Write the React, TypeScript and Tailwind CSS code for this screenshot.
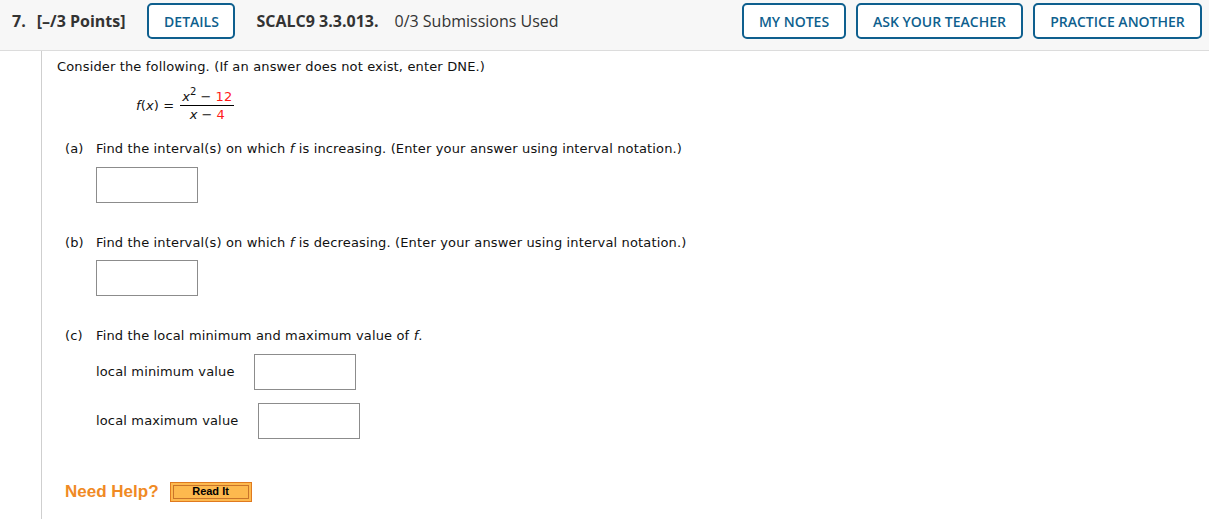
import React from "react";

const blueBtn =
  "h-[36px] border-2 border-[#0e5f8e] rounded-[5px] text-[#0e5f8e] text-[14px] font-semibold flex items-center justify-center bg-white";

function Box({ className = "" }: { className?: string }) {
  return <div className={`w-[102px] h-[36px] border border-[#8c8c8c] bg-white ${className}`} />;
}

export default function App() {
  return (
    <div className="w-[1209px] h-[519px] bg-white overflow-hidden" style={{ fontFamily: "'Open Sans', sans-serif" }}>
      <div className="h-[51px] bg-[#f7f7f7] border-b border-[#dcdcdc] flex items-center pl-[12px] pr-[7px] pb-[8px]">
        <span className="text-[16px] font-bold text-[#333]">7.</span>
        <span className="text-[16px] font-bold text-[#333] ml-[11px]">[–/3 Points]</span>
        <div className={`${blueBtn} w-[88px] ml-[22px]`}>DETAILS</div>
        <span className="text-[16px] font-bold text-[#333] ml-[21px]">SCALC9 3.3.013.</span>
        <span className="text-[16px] text-[#333] ml-[16px]">0/3 Submissions Used</span>
        <div className="flex-1" />
        <div className={`${blueBtn} w-[104px]`}>MY NOTES</div>
        <div className={`${blueBtn} w-[167px] ml-[10px]`}>ASK YOUR TEACHER</div>
        <div className={`${blueBtn} w-[169px] ml-[10px]`}>PRACTICE ANOTHER</div>
      </div>
      <div className="flex h-[468px]">
        <div className="w-[42px] border-r border-[#cfcfcf]" />
        <div
          className="pl-[15px] pt-[8px] text-[13px] tracking-[0.15px] text-[#111]"
          style={{ fontFamily: "'DejaVu Sans', Verdana, sans-serif" }}
        >
          <div className="leading-[16px]">Consider the following. (If an answer does not exist, enter DNE.)</div>
          <div className="flex items-center ml-[79px] mt-[14px]">
            <span>
              <span className="italic">f</span>(<span className="italic">x</span>) =
            </span>
            <div className="flex flex-col items-center ml-[6px]">
              <div className="leading-[16px] px-[2px] tracking-normal">
                <span className="italic">x</span>
                <sup className="text-[10px] top-[-6px]">2</sup> − <span className="text-[#ff1a1a]">12</span>
              </div>
              <div className="w-full h-px bg-black" />
              <div className="leading-[16px] pt-[1px] tracking-normal">
                <span className="italic">x</span> − <span className="text-[#ff1a1a]">4</span>
              </div>
            </div>
          </div>
          <div className="flex mt-[18px] leading-[16px] ml-[8px]">
            <span className="w-[31px]">(a)</span>
            <span>
              Find the interval(s) on which <span className="italic">f</span> is increasing. (Enter your answer using interval notation.)
            </span>
          </div>
          <Box className="ml-[39px] mt-[10px]" />
          <div className="flex mt-[32px] leading-[16px] ml-[8px]">
            <span className="w-[31px]">(b)</span>
            <span>
              Find the interval(s) on which <span className="italic">f</span> is decreasing. (Enter your answer using interval notation.)
            </span>
          </div>
          <Box className="ml-[39px] mt-[9px]" />
          <div className="flex mt-[32px] leading-[16px] ml-[8px]">
            <span className="w-[31px]">(c)</span>
            <span>
              Find the local minimum and maximum value of <span className="italic">f</span>.
            </span>
          </div>
          <div className="flex items-center ml-[39px] mt-[10px]">
            <span className="w-[158px]">local minimum value</span>
            <Box />
          </div>
          <div className="flex items-center ml-[39px] mt-[13px]">
            <span className="w-[162px]">local maximum value</span>
            <Box />
          </div>
          <div className="flex items-center ml-[8px] mt-[40px]">
            <span className="text-[17px] font-bold text-[#f08a24] tracking-normal" style={{ fontFamily: "'Liberation Sans', Arial, sans-serif" }}>
              Need Help?
            </span>
            <div
              className="ml-[11px] w-[82px] h-[20px] border border-[#e07a1f] bg-[#fdb94e] p-[2px] tracking-normal"
              style={{ fontFamily: "'Liberation Sans', Arial, sans-serif" }}
            >
              <div className="w-full h-full border border-[#c9742a] flex items-center justify-center text-[11px] font-bold text-black leading-none">
                Read It
              </div>
            </div>
          </div>
        </div>
      </div>
    </div>
  );
}
